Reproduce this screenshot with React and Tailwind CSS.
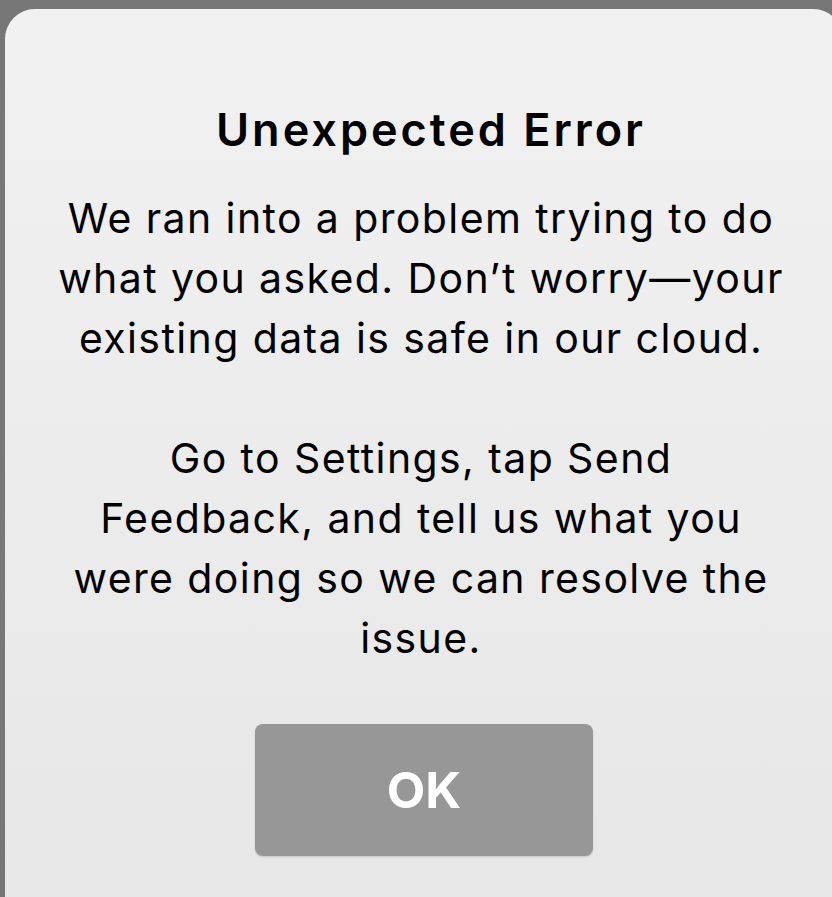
const App = () => {
    return (
        <div className="w-[832px] h-[897px] overflow-hidden bg-[#777777] pt-[9px] pl-[5px]">
            <div className="w-[838px] h-[900px] rounded-t-[30px] bg-gradient-to-b from-[#f1f1f1] to-[#e7e7e7] flex flex-col items-center pt-[96px] font-['Inter','Liberation_Sans',sans-serif] text-black">
                <h1 className="ml-[14px] text-[45px] leading-[50px] font-semibold tracking-[3px]">Unexpected Error</h1>
                <div className="mt-[33px] mr-[6px] text-[41px] leading-[60px] text-center tracking-[1.4px]">
                    <p>
                        We ran into a problem trying to do<br />
                        what you asked. Don’t worry—your<br />
                        existing data is safe in our cloud.
                    </p>
                    <p className="mt-[60px]">
                        Go to Settings, tap Send<br />
                        Feedback, and tell us what you<br />
                        were doing so we can resolve the<br />
                        issue.
                    </p>
                </div>
                <button className="mt-[56px] w-[338px] h-[132px] rounded-[8px] bg-[#979797] shadow-[0_1px_2px_rgba(0,0,0,0.15)] text-white text-[50px] font-bold">
                    OK
                </button>
            </div>
        </div>
    )
}

export default App;
